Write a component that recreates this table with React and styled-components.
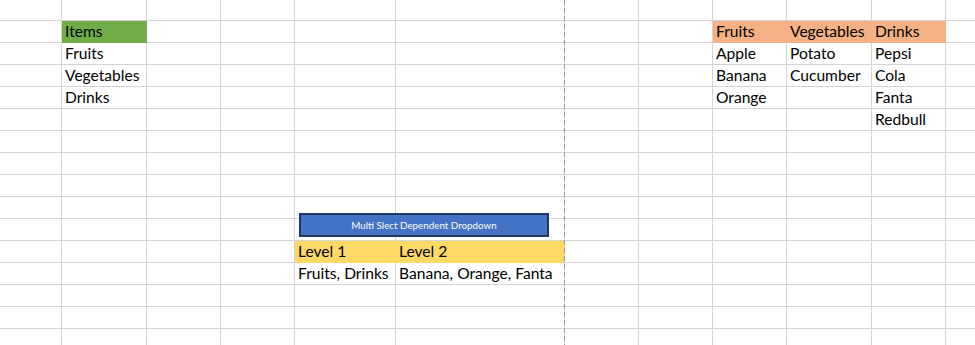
import React from 'react';
import styled, { createGlobalStyle } from 'styled-components';

const GlobalStyle = createGlobalStyle`
  html, body {
    margin: 0;
    padding: 0;
    background: #ffffff;
    overflow: hidden;
  }
  body {
    font-family: Lato, "Open Sans", sans-serif;
  }
`;

// column widths include the 1px grid line on the right
const COLS = [62, 85, 74, 74, 101, 169, 74, 74, 74, 85, 74, 40];
const ROW_COUNT = 16;
const PAGE_BREAK_COL = 5;

const GREEN = '#70ad47';
const ORANGE = '#f4b183';
const YELLOW = '#ffd966';

// [row, col, text, fill]
const cells = [
  [1, 1, 'Items', GREEN],
  [2, 1, 'Fruits'],
  [3, 1, 'Vegetables'],
  [4, 1, 'Drinks'],

  [1, 8, 'Fruits', ORANGE],
  [1, 9, 'Vegetables', ORANGE],
  [1, 10, 'Drinks', ORANGE],
  [2, 8, 'Apple'],
  [2, 9, 'Potato'],
  [2, 10, 'Pepsi'],
  [3, 8, 'Banana'],
  [3, 9, 'Cucumber'],
  [3, 10, 'Cola'],
  [4, 8, 'Orange'],
  [4, 10, 'Fanta'],
  [5, 10, 'Redbull'],

  [11, 4, 'Level 1', YELLOW],
  [11, 5, 'Level 2', YELLOW],
  [12, 4, 'Fruits, Drinks'],
  [12, 5, 'Banana, Orange, Fanta'],
];

const lookup = {};
cells.forEach(([r, c, text, fill]) => {
  lookup[`${r}:${c}`] = { text, fill };
});

const Sheet = styled.div`
  position: relative;
  display: grid;
  grid-template-columns: ${COLS.map((w) => `${w}px`).join(' ')};
  grid-template-rows: 21px repeat(${ROW_COUNT - 1}, 22px);
  width: 975px;
  height: 345px;
  overflow: hidden;
`;

const Cell = styled.div`
  box-sizing: border-box;
  display: flex;
  align-items: flex-end;
  padding: 0 0 2px 3px;
  white-space: nowrap;
  overflow: visible;
  font-size: 15.6px;
  line-height: 18px;
  color: #000000;
  background: ${(p) => p.$fill || 'transparent'};
  border-bottom: 1px solid ${(p) => p.$fill || '#d4d4d4'};
  border-right: 1px solid ${(p) => p.$fill || '#d4d4d4'};
`;

// dashed page-break marker drawn over the grid
const PageBreak = styled.div`
  position: absolute;
  top: 0;
  bottom: 0;
  left: ${(p) => p.$x}px;
  width: 1px;
  background: repeating-linear-gradient(
    to bottom,
    #9a9a9a 0,
    #9a9a9a 5px,
    transparent 5px,
    transparent 8px
  );
`;

const ShapeButton = styled.div`
  position: absolute;
  left: 299px;
  top: 213px;
  width: 250px;
  height: 24px;
  box-sizing: border-box;
  display: flex;
  align-items: center;
  justify-content: center;
  background: #4472c4;
  border: 2px solid #1f3864;
  color: #ffffff;
  font-size: 9.8px;
`;

export default function App() {
  const grid = [];
  for (let r = 0; r < ROW_COUNT; r++) {
    for (let c = 0; c < COLS.length; c++) {
      const cell = lookup[`${r}:${c}`];
      grid.push(
        <Cell key={`${r}-${c}`} $fill={cell?.fill}>
          {cell?.text}
        </Cell>
      );
    }
  }
  const breakX = COLS.slice(0, PAGE_BREAK_COL + 1).reduce((a, b) => a + b, 0) - 1;

  return (
    <>
      <GlobalStyle />
      <Sheet>
        {grid}
        <PageBreak $x={breakX} />
        <ShapeButton>Multi Slect Dependent Dropdown</ShapeButton>
      </Sheet>
    </>
  );
}
